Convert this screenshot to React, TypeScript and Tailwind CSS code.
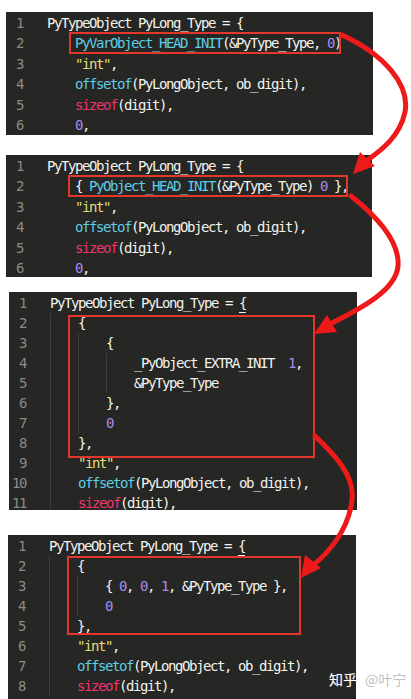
type Tok = [string, string];
type Line = { indent: number; toks: Tok[] };

const C: Record<string, string> = {
  t: "text-[#f3f3ee]",
  f: "text-[#5fcde4]",
  n: "text-[#a98bf0]",
  k: "text-[#f0346e]",
  s: "text-[#e4dc7a]",
  u: "text-[#f3f3ee] underline underline-offset-[4px]",
};

const head: Line = { indent: 0, toks: [["t", "PyTypeObject PyLong_Type = "], ["u", "{"]] };
const intL = (i = 1): Line => ({ indent: i, toks: [["s", '"int"'], ["t", ","]] });
const offL: Line = { indent: 1, toks: [["f", "offsetof"], ["t", "(PyLongObject, ob_digit),"]] };
const sizeL: Line = { indent: 1, toks: [["k", "sizeof"], ["t", "(digit),"]] };

const block1: Line[] = [
  head,
  { indent: 1, toks: [["f", "PyVarObject_HEAD_INIT"], ["t", "(&PyType_Type, "], ["n", "0"], ["t", ")"]] },
  intL(),
  offL,
  sizeL,
  { indent: 1, toks: [["n", "0"], ["t", ","]] },
];

const block2: Line[] = [
  head,
  { indent: 1, toks: [["t", "{ "], ["f", "PyObject_HEAD_INIT"], ["t", "(&PyType_Type) "], ["n", "0"], ["t", " },"]] },
  intL(),
  offL,
  sizeL,
  { indent: 1, toks: [["n", "0"], ["t", ","]] },
];

const block3: Line[] = [
  head,
  { indent: 1, toks: [["t", "{"]] },
  { indent: 2, toks: [["t", "{"]] },
  { indent: 3, toks: [["t", "_PyObject_EXTRA_INIT  "], ["n", "1"], ["t", ","]] },
  { indent: 3, toks: [["t", "&PyType_Type"]] },
  { indent: 2, toks: [["t", "},"]] },
  { indent: 2, toks: [["n", "0"]] },
  { indent: 1, toks: [["t", "},"]] },
  intL(),
  offL,
  sizeL,
];

const block4: Line[] = [
  head,
  { indent: 1, toks: [["t", "{"]] },
  {
    indent: 2,
    toks: [["t", "{ "], ["n", "0"], ["t", ", "], ["n", "0"], ["t", ", "], ["n", "1"], ["t", ", &PyType_Type },"]],
  },
  { indent: 2, toks: [["n", "0"]] },
  { indent: 1, toks: [["t", "},"]] },
  intL(),
  offL,
  sizeL,
];

const CodeBlock = ($: {
  lines: Line[];
  guides?: boolean;
  lh: string;
  cls: string;
  box: string;
}) => (
  <div className={"relative overflow-hidden bg-[#262624] pt-[1px] " + $.cls}>
    {$.lines.map((l, i) => (
      <div key={i} className={"flex whitespace-pre " + $.lh}>
        <div className="w-[17px] shrink-0 text-right text-[#8b8b86]">{i + 1}</div>
        <div className="w-[24px] shrink-0" />
        {Array.from({ length: l.indent }).map((_, j) => (
          <span
            key={j}
            className={
              "inline-block w-[28px] shrink-0 border-l " +
              ($.guides && i > 0 ? "border-[#3d3d3a]" : "border-transparent")
            }
          />
        ))}
        <span>
          {l.toks.map(([c, s], j) => (
            <span key={j} className={C[c]}>
              {s}
            </span>
          ))}
        </span>
      </div>
    ))}
    <div className={"absolute border-2 border-[#e2382c] " + $.box} />
  </div>
);

export default function App() {
  return (
    <div
      className="relative w-[411px] h-[699px] overflow-hidden bg-white text-[14px] tracking-[-1.43px]"
      style={{ fontFamily: '"DejaVu Sans Mono", "Liberation Mono", monospace' }}
    >
      <div className="flex flex-col items-start">
        <CodeBlock
          lines={block1}
          lh="h-[20.4px] leading-[20.4px]"
          cls="mt-[12px] ml-[6px] w-[367px] h-[123px]"
          box="left-[63px] top-[20px] w-[272px] h-[22px]"
        />
        <CodeBlock
          lines={block2}
          lh="h-[20.4px] leading-[20.4px]"
          cls="mt-[20px] ml-[6px] w-[366px] h-[122px]"
          box="left-[62px] top-[20px] w-[280px] h-[22px]"
        />
        <CodeBlock
          lines={block3}
          guides
          lh="h-[20px] leading-[20px]"
          cls="mt-[15px] ml-[9px] w-[348px] h-[218px]"
          box="left-[59px] top-[23px] w-[247px] h-[143px]"
        />
        <CodeBlock
          lines={block4}
          guides
          lh="h-[20px] leading-[20px]"
          cls="mt-[25px] ml-[8px] w-[348px] h-[164px]"
          box="left-[59px] top-[21px] w-[234px] h-[79px]"
        />
      </div>

      <svg className="pointer-events-none absolute left-0 top-0" width="411" height="699" viewBox="0 0 411 699">
        <g fill="none" stroke="#ee1a1a" strokeWidth="5" strokeLinecap="round">
          <path d="M342 35 C 385 55, 410 85, 405 112 C 400 136, 382 150, 366 161" />
          <path d="M351 196 C 375 215, 400 240, 398 266 C 396 290, 362 308, 330 324" />
          <path d="M315 436 C 335 455, 355 476, 352 500 C 349 528, 330 552, 312 566" />
        </g>
        <g fill="#ee1a1a">
          <polygon points="353,174 375,166 360,152" />
          <polygon points="314,334 337,332 327,315" />
          <polygon points="301,578 321,568 305,555" />
        </g>
      </svg>

      <div
        className="absolute left-[329px] top-[669px] flex items-center gap-[8px] text-[14px] tracking-normal"
        style={{ fontFamily: '"Noto Sans CJK SC", "Noto Sans", sans-serif' }}
      >
        <span className="text-white [text-shadow:0_0_1px_#777]">知乎</span>
        <span className="text-[#c2c2c2]">@叶宁</span>
      </div>
    </div>
  );
}
